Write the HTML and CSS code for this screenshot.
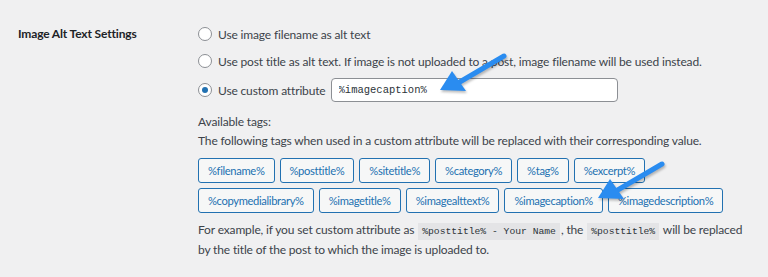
FILE: index.html
```html
<!DOCTYPE html>
<html lang="en">
<head>
    <meta charset="UTF-8">
    <title>Image Alt Text Settings</title>
    <link rel="stylesheet" href="styles.css">
</head>
<body>
    <div class="settings">
        <div class="row">
            <div class="label">Image Alt Text Settings</div>
            <div class="field">
                <label class="option"><span class="radio"></span>Use image filename as alt text</label>
                <label class="option"><span class="radio"></span>Use post title as alt text. If image is not uploaded to a post, image filename will be used instead.</label>
                <label class="option"><span class="radio checked"></span>Use custom attribute <input type="text" class="custom" value="%imagecaption%"></label>

                <p class="desc first">Available tags:</p>
                <p class="desc">The following tags when used in a custom attribute will be replaced with their corresponding value.</p>

                <div class="tags">
                    <span class="tag">%filename%</span>
                    <span class="tag">%posttitle%</span>
                    <span class="tag">%sitetitle%</span>
                    <span class="tag">%category%</span>
                    <span class="tag">%tag%</span>
                    <span class="tag">%excerpt%</span>
                    <span class="tag">%copymedialibrary%</span>
                    <span class="tag">%imagetitle%</span>
                    <span class="tag">%imagealttext%</span>
                    <span class="tag">%imagecaption%</span>
                    <span class="tag">%imagedescription%</span>
                </div>

                <p class="desc example">For example, if you set custom attribute as <code>%posttitle% - Your Name</code>, the <code>%posttitle%</code> will be replaced<br>by the title of the post to which the image is uploaded to.</p>
            </div>
        </div>

        <!-- callout arrows -->
        <svg class="arrow arrow-input" width="80" height="50" viewBox="0 0 80 50">
            <line x1="68" y1="5" x2="22" y2="32" stroke="#2a8cf0" stroke-width="5" stroke-linecap="round"/>
            <polygon points="4,39 16,20 30,40" fill="#2a8cf0"/>
        </svg>
        <svg class="arrow arrow-tag" width="80" height="50" viewBox="0 0 80 50">
            <line x1="68" y1="5" x2="22" y2="32" stroke="#2a8cf0" stroke-width="5" stroke-linecap="round"/>
            <polygon points="4,39 16,20 30,40" fill="#2a8cf0"/>
        </svg>
    </div>
</body>
</html>
```

FILE: styles.css
```css
body {
    margin: 0;
    background-color: #f0f0f1;
    font-family: Lato, "Open Sans", sans-serif;
    font-size: 12px;
    letter-spacing: -0.15px;
    color: #3c434a;
}
.settings {
    position: relative;
    height: 277px;
    padding: 24px 0 0 18px;
    box-sizing: border-box;
    overflow: hidden;
}
.row {
    display: flex;
}
.label {
    width: 180px;
    flex-shrink: 0;
    font-weight: 700;
    color: #1d2327;
    line-height: 20px;
}
.field {
    flex: 1;
}
.option {
    display: flex;
    align-items: center;
    height: 20px;
    margin-bottom: 7px;
    white-space: nowrap;
}
.option:nth-child(3) {
    height: 24px;
}
.radio {
    width: 14px;
    height: 14px;
    border: 1px solid #8c8f94;
    border-radius: 50%;
    background: #fff;
    margin-right: 6px;
    box-sizing: border-box;
    position: relative;
}
.radio.checked::after {
    content: "";
    position: absolute;
    left: 3px;
    top: 3px;
    width: 6px;
    height: 6px;
    border-radius: 50%;
    background: #2271b1;
}
.custom {
    margin-left: 5px;
    width: 287px;
    height: 24px;
    box-sizing: border-box;
    border: 1px solid #8c8f94;
    border-radius: 4px;
    padding: 0 7px;
    font-family: "Liberation Mono", monospace;
    font-size: 10.5px;
    letter-spacing: 0;
    color: #2c3338;
    background: #fff;
}
.desc {
    margin: 0;
    line-height: 19px;
    white-space: nowrap;
}
.desc.first {
    margin-top: 10px;
}
.tags {
    display: flex;
    flex-wrap: wrap;
    gap: 5px;
    margin: 8px 0 0;
    width: 540px;
}
.tag {
    height: 25px;
    line-height: 23px;
    padding: 0 9px;
    border: 1px solid #2271b1;
    border-radius: 3px;
    background: #f6f7f7;
    color: #2271b1;
    font-size: 11.2px;
    letter-spacing: -0.35px;
    box-sizing: border-box;
}
.example {
    margin-top: 8px;
    line-height: 18px;
}
code {
    font-family: "Liberation Mono", monospace;
    font-size: 9.7px;
    letter-spacing: 0;
    color: #2c3338;
    background: #e4e4e6;
    padding: 3px 4px;
    margin: 0 1px;
}
.arrow {
    position: absolute;
    filter: drop-shadow(1px 2px 1px rgba(0, 0, 0, 0.25));
}
.arrow-input {
    left: 436px;
    top: 51px;
}
.arrow-tag {
    left: 594px;
    top: 159px;
}
```
